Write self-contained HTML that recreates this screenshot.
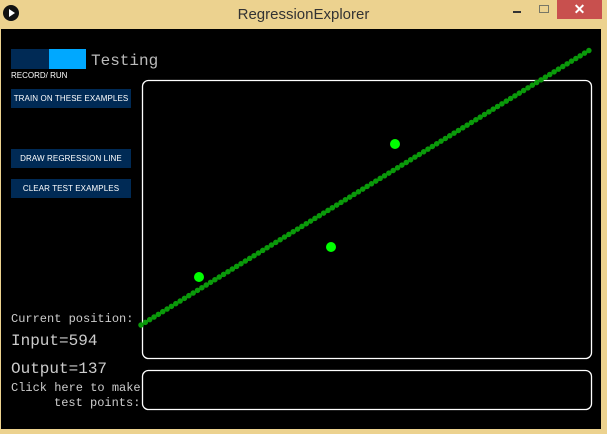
<!DOCTYPE html>
<html><head><style>
body{margin:0;width:607px;height:434px;background:#ecd28f;position:relative;overflow:hidden;font-family:"Liberation Mono",monospace}
.t{position:absolute;top:0;left:0;width:607px;height:29px;text-align:center;font:15px "Liberation Sans",sans-serif;color:#333;line-height:30px}
.main{position:absolute;left:1px;top:29px;width:600px;height:400px;background:#000}
.btn{position:absolute;left:11px;width:120px;height:19px;background:#002a55;color:#fff;font:8px "Liberation Sans",sans-serif;text-align:center;line-height:19px;letter-spacing:.1px}
.tx{position:absolute;color:#ccc;white-space:pre}
</style></head><body>
<div class="t">RegressionExplorer</div>
<div style="position:absolute;left:3px;top:5px;width:16px;height:16px;border-radius:50%;background:#111"></div>
<div style="position:absolute;left:9px;top:9px;width:0;height:0;border-left:6px solid #fff;border-top:4px solid transparent;border-bottom:4px solid transparent"></div>
<div style="position:absolute;left:513px;top:11px;width:8px;height:2px;background:#333"></div>
<div style="position:absolute;left:539px;top:5px;width:8px;height:6px;border:1px solid #776"></div>
<div style="position:absolute;left:557px;top:0;width:45px;height:19px;background:#c8504e;color:#fff;text-align:center;font:bold 14px 'Liberation Sans';line-height:19px">✕</div>
<div class="main"></div>
<div style="position:absolute;left:11px;top:49px;width:38px;height:20px;background:#002a55"></div>
<div style="position:absolute;left:49px;top:49px;width:37px;height:20px;background:#00a8ff"></div>
<div class="tx" style="left:91px;top:52px;font-size:16px;color:#bbb">Testing</div>
<div class="tx" style="left:11px;top:71px;font:8px 'Liberation Sans';color:#fff">RECORD/ RUN</div>
<div class="btn" style="top:89px">TRAIN ON THESE EXAMPLES</div>
<div class="btn" style="top:149px">DRAW REGRESSION LINE</div>
<div class="btn" style="top:179px">CLEAR TEST EXAMPLES</div>
<div class="tx" style="left:11px;top:312px;font-size:12px">Current position:</div>
<div class="tx" style="left:11px;top:332px;font-size:16px">Input=594</div>
<div class="tx" style="left:11px;top:360px;font-size:16px">Output=137</div>
<div class="tx" style="left:11px;top:381px;font-size:12px">Click here to make</div>
<div class="tx" style="left:54px;top:396px;font-size:12px">test points:</div>
<svg style="position:absolute;left:0;top:0" width="607" height="434">
<rect x="142.5" y="80.5" width="449" height="278" rx="6" fill="none" stroke="#fff" stroke-width="1.3"/>
<rect x="142.5" y="370.5" width="449" height="39" rx="6" fill="none" stroke="#fff" stroke-width="1.3"/>
<line x1="141" y1="325" x2="593" y2="48" stroke="#0a9a0a" stroke-width="5.5" stroke-linecap="round" stroke-dasharray="0 5.1"/>
<circle cx="395" cy="144" r="5" fill="#00ff00"/>
<circle cx="331" cy="247" r="5" fill="#00ff00"/>
<circle cx="199" cy="277" r="5" fill="#00ff00"/>
</svg>
</body></html>
